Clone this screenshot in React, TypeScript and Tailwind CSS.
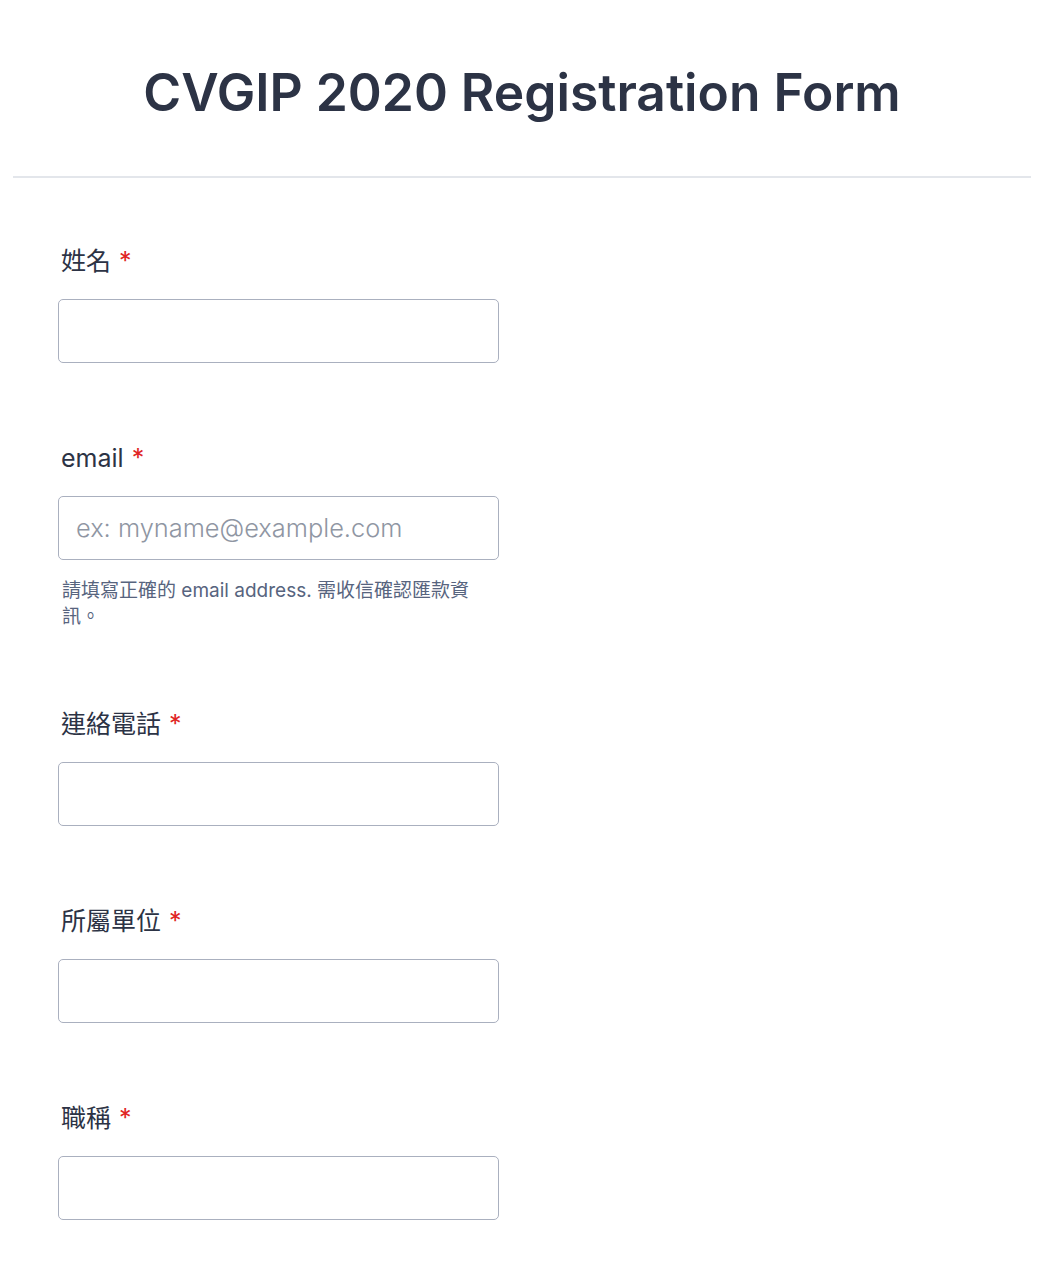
import React from "react";

type Field = {
  label: string;
  placeholder?: string;
  help?: string;
};

const fields: Field[] = [
  { label: "姓名" },
  {
    label: "email",
    placeholder: "ex: myname@example.com",
    help: "請填寫正確的 email address. 需收信確認匯款資訊。",
  },
  { label: "連絡電話" },
  { label: "所屬單位" },
  { label: "職稱" },
];

const FormField = ({ field }: { field: Field }) => (
  <div className="pb-[77px]">
    <label className="block pl-[3px] text-[25px] leading-[36px] font-normal text-[#2c3345]">
      {field.label}
      <span className="ml-[8px] text-[#e02424]">*</span>
    </label>
    <input
      type="text"
      placeholder={field.placeholder}
      className="mt-[20px] block h-[64px] w-[441px] rounded-[5px] border border-[#aab0bf] bg-white px-[17px] text-[25.4px] font-light text-[#2c3345] placeholder:text-[#8f96a3] outline-none"
    />
    {field.help && (
      <p className="mt-[18px] -mb-[1px] w-[420px] pl-[4px] text-[19px] leading-[26px] text-[#57647e]">
        {field.help}
      </p>
    )}
  </div>
);

export default function App() {
  return (
    <div
      className="min-h-screen bg-white px-[13px]"
      style={{ fontFamily: 'Inter, "Noto Sans CJK TC", sans-serif' }}
    >
      {/* HEADER */}
      <div className="border-b-2 border-[#e3e6eb] pt-[62px] pb-[52px]">
        <h1 className="text-center text-[51.5px] leading-[1.2] font-semibold text-[#2c3345]">
          CVGIP 2020 Registration Form
        </h1>
      </div>

      {/* FIELDS */}
      <div className="pt-[65px] pl-[45px]">
        {fields.map((f) => (
          <FormField key={f.label} field={f} />
        ))}
      </div>
    </div>
  );
}
